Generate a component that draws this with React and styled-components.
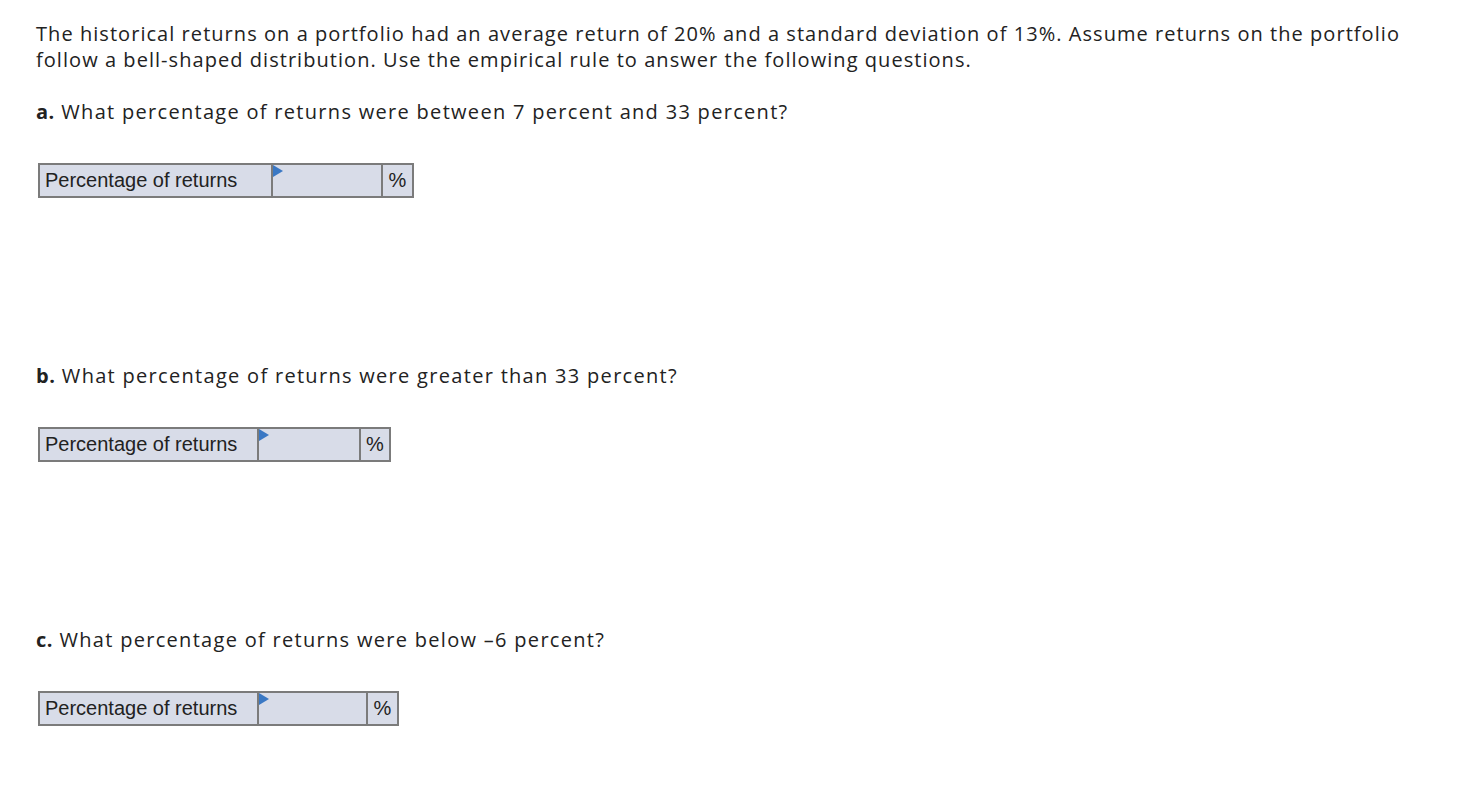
import React from 'react'
import styled, { createGlobalStyle } from 'styled-components'

const GlobalStyle = createGlobalStyle`
    body {
        margin: 0;
        background: #fff;
        font-family: "Open Sans", Lato, sans-serif;
        color: #222;
    }
`

const questions = [
    { letter: 'a.', text: 'What percentage of returns were between 7 percent and 33 percent?', labelW: 231, inputW: 110, unitW: 31 },
    { letter: 'b.', text: 'What percentage of returns were greater than 33 percent?', labelW: 217, inputW: 102, unitW: 30 },
    { letter: 'c.', text: 'What percentage of returns were below \u20136 percent?', labelW: 217, inputW: 109, unitW: 31 },
]

const App = () => {
    return (
        <>
        <GlobalStyle />
        <Page>
            <Intro>
                The historical returns on a portfolio had an average return of 20% and a standard deviation of 13%. Assume returns on the portfolio follow a bell-shaped distribution. Use the empirical rule to answer the following questions.
            </Intro>
            {questions.map(q => (
                <Question key={q.letter}>
                    <Prompt><b>{q.letter}</b> {q.text}</Prompt>
                    <AnswerTable>
                        <Cell width={q.labelW}>Percentage of returns</Cell>
                        <InputCell width={q.inputW}><Flag /></InputCell>
                        <Cell width={q.unitW} center>%</Cell>
                    </AnswerTable>
                </Question>
            ))}
        </Page>
        </>
    )
}

const Page = styled.div`
    padding: 21px 36px;
    width: 1380px;
`

const Intro = styled.p`
    margin: 0;
    font-size: 20px;
    line-height: 26px;
    letter-spacing: 1.05px;
`

const Question = styled.div`
    margin-top: 26px;
    height: 238px;
`

const Prompt = styled.p`
    margin: 0;
    font-size: 20px;
    line-height: 26px;
    letter-spacing: 1.3px;

    b {
        font-weight: 700;
        letter-spacing: 0.5px;
    }
`

const AnswerTable = styled.div`
    display: flex;
    margin: 38px 0 0 2px;
    height: 35px;
    width: fit-content;
    border: 2px solid #7b7b7b;
    box-sizing: border-box;
    background: #d8dce8;
    font-family: "Liberation Sans", Arial, sans-serif;
    font-size: 20px;
    color: #222;
`

const Cell = styled.div`
    box-sizing: border-box;
    width: ${p => p.width}px;
    display: flex;
    align-items: center;
    justify-content: ${p => (p.center ? 'center' : 'flex-start')};
    padding: 0 ${p => (p.center ? 0 : 5)}px;
    border-left: 2px solid #7b7b7b;

    &:first-child {
        border-left: none;
    }
`

const InputCell = styled(Cell)`
    position: relative;
`

const Flag = styled.span`
    position: absolute;
    top: 0;
    left: 0;
    width: 0;
    height: 0;
    border-top: 6px solid transparent;
    border-bottom: 6px solid transparent;
    border-left: 10px solid #3a78c4;
`

export default App
